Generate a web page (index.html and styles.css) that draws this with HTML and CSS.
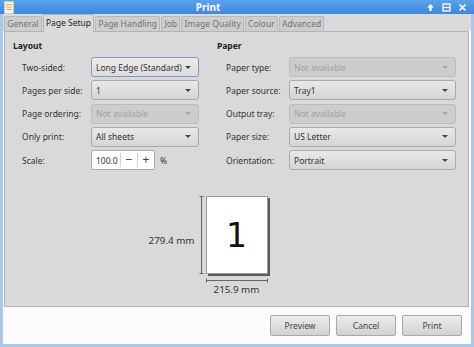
FILE: index.html
```html
<!DOCTYPE html>
<html lang="en">
<head>
    <meta charset="UTF-8">
    <title>Print</title>
    <link rel="stylesheet" href="styles.css">
</head>
<body>
<div class="window">
    <div class="titlebar">
        <span class="app-icon">
            <svg width="10" height="13" viewBox="0 0 10 13">
                <rect x="0.5" y="0.5" width="9" height="12" fill="#f4f4f0" stroke="#c9c9c0"/>
                <line x1="2" y1="3.5" x2="8" y2="3.5" stroke="#e0b040"/>
                <line x1="2" y1="6" x2="8" y2="6" stroke="#e0b040"/>
                <line x1="2" y1="8.5" x2="8" y2="8.5" stroke="#e0b040"/>
            </svg>
        </span>
        <span class="title">Print</span>
        <span class="controls">
            <svg width="9" height="9" viewBox="0 0 9 9"><path d="M4.5 1 L8 4.5 H5.7 V8 H3.3 V4.5 H1 Z" fill="#fff"/></svg>
            <svg width="9" height="9" viewBox="0 0 9 9"><rect x="1" y="1" width="7" height="7" fill="none" stroke="#fff" stroke-width="1.3"/><line x1="1" y1="4.5" x2="8" y2="4.5" stroke="#fff" stroke-width="1.3"/></svg>
            <svg width="9" height="9" viewBox="0 0 9 9"><path d="M1.5 1.5 L7.5 7.5 M7.5 1.5 L1.5 7.5" stroke="#fff" stroke-width="1.7"/></svg>
        </span>
    </div>
    <div class="dialog">
        <div class="tabs">
            <span class="tab">General</span>
            <span class="tab active">Page Setup</span>
            <span class="tab">Page Handling</span>
            <span class="tab">Job</span>
            <span class="tab">Image Quality</span>
            <span class="tab">Colour</span>
            <span class="tab">Advanced</span>
        </div>
        <div class="panel">
            <div class="columns">
                <section class="group">
                    <h3>Layout</h3>
                    <div class="form layout-form">
                        <label>Two-sided:</label>
                        <div class="combo focus"><span>Long Edge (Standard)</span><i class="arrow"></i></div>
                        <label>Pages per side:</label>
                        <div class="combo"><span>1</span><i class="arrow"></i></div>
                        <label>Page ordering:</label>
                        <div class="combo disabled"><span>Not available</span><i class="arrow"></i></div>
                        <label>Only print:</label>
                        <div class="combo"><span>All sheets</span><i class="arrow"></i></div>
                        <label>Scale:</label>
                        <div class="scale">
                            <div class="spin">
                                <span class="value">100.0</span>
                                <span class="step">&minus;</span>
                                <span class="step">+</span>
                            </div>
                            <span class="unit">%</span>
                        </div>
                    </div>
                </section>
                <section class="group">
                    <h3>Paper</h3>
                    <div class="form paper-form">
                        <label>Paper type:</label>
                        <div class="combo disabled"><span>Not available</span><i class="arrow"></i></div>
                        <label>Paper source:</label>
                        <div class="combo"><span>Tray1</span><i class="arrow"></i></div>
                        <label>Output tray:</label>
                        <div class="combo disabled"><span>Not available</span><i class="arrow"></i></div>
                        <label>Paper size:</label>
                        <div class="combo"><span>US Letter</span><i class="arrow"></i></div>
                        <label>Orientation:</label>
                        <div class="combo"><span>Portrait</span><i class="arrow"></i></div>
                    </div>
                </section>
            </div>
            <div class="preview">
                <div class="side left">
                    <span class="dim">279.4 mm</span>
                    <svg class="vruler" width="5" height="78" viewBox="0 0 5 78">
                        <line x1="2.5" y1="0" x2="2.5" y2="78" stroke="#666"/>
                        <line x1="0.5" y1="0.5" x2="4.5" y2="0.5" stroke="#666"/>
                        <line x1="0.5" y1="77.5" x2="4.5" y2="77.5" stroke="#666"/>
                    </svg>
                </div>
                <div class="sheet-col">
                    <div class="sheet">1</div>
                    <svg class="hruler" width="62" height="5" viewBox="0 0 62 5">
                        <line x1="0" y1="2.5" x2="62" y2="2.5" stroke="#666"/>
                        <line x1="0.5" y1="0.5" x2="0.5" y2="4.5" stroke="#666"/>
                        <line x1="61.5" y1="0.5" x2="61.5" y2="4.5" stroke="#666"/>
                    </svg>
                    <span class="dim">215.9 mm</span>
                </div>
                <div class="side"></div>
            </div>
        </div>
        <div class="buttons">
            <button>Preview</button>
            <button>Cancel</button>
            <button>Print</button>
        </div>
    </div>
</div>
</body>
</html>
```

FILE: styles.css
```css
body {
    margin: 0;
    font-family: "Noto Sans", sans-serif;
    font-size: 8.5px;
    color: #333;
    background-color: #a9c8ec;
}
.window {
    width: 474px;
    height: 347px;
    display: flex;
    flex-direction: column;
}
.titlebar {
    height: 14px;
    flex: none;
    display: flex;
    align-items: center;
    background: linear-gradient(#5ba2ee, #3d88de);
    color: white;
}
.app-icon {
    width: 16px;
    padding-left: 4px;
    display: flex;
    align-items: center;
}
.title {
    flex: 1;
    text-align: center;
    font-weight: bold;
    font-size: 10px;
    padding-right: 30px;
}
.controls {
    display: flex;
    gap: 7px;
    padding-right: 7px;
}
.dialog {
    flex: 1;
    margin: 0 3px 3px;
    background-color: #fcfcfc;
    display: flex;
    flex-direction: column;
}
.tabs {
    height: 17px;
    flex: none;
    display: flex;
    align-items: flex-end;
    gap: 1px;
    padding-left: 1px;
    background-color: #dadada;
    position: relative;
    z-index: 1;
}
.tab {
    height: 15px;
    line-height: 14px;
    padding: 0 2.2px;
    box-sizing: border-box;
    border: 1px solid #b7b7b7;
    border-bottom: none;
    border-radius: 2px 2px 0 0;
    background-color: #cecece;
    color: #707070;
}
.tab.active {
    height: 18px;
    line-height: 16px;
    margin-bottom: -1px;
    background-color: #dadada;
    color: #222;
}
.panel {
    flex: 1;
    margin: 0 2px 0 1px;
    border: 1px solid #b3b3b3;
    background-color: #d9d9d9;
    padding: 8px 8px 0;
    display: flex;
    flex-direction: column;
}
.columns {
    display: grid;
    grid-template-columns: 204px 1fr;
}
.group h3 {
    margin: 0;
    font-size: 8.5px;
    line-height: 12px;
    color: #222;
}
.form {
    display: grid;
    grid-auto-rows: 20px;
    row-gap: 3.25px;
    align-items: center;
    padding-left: 9px;
    margin-top: 5px;
}
.layout-form {
    grid-template-columns: 69px 108px;
}
.paper-form {
    grid-template-columns: 63px 167px;
}
.combo {
    height: 20px;
    box-sizing: border-box;
    border: 1px solid #aaaaaa;
    border-radius: 3px;
    background: linear-gradient(#e9e9e9, #d5d5d5);
    padding: 0 7px 0 4px;
    display: flex;
    align-items: center;
    justify-content: space-between;
    color: #333;
}
.combo.focus {
    border-color: #7f9dc2;
    background: linear-gradient(#ececec, #dcdcdc);
}
.combo.disabled {
    border-color: #bcbcbc;
    background: #cdcdcd;
    color: #a0a0a0;
}
.arrow {
    width: 0;
    height: 0;
    border-left: 3px solid transparent;
    border-right: 3px solid transparent;
    border-top: 3px solid #444;
}
.combo.disabled .arrow {
    border-top-color: #a8a8a8;
}
.scale {
    display: flex;
    align-items: center;
}
.spin {
    width: 64px;
    height: 20px;
    box-sizing: border-box;
    border: 1px solid #aaaaaa;
    border-radius: 2px;
    background-color: white;
    display: flex;
    align-items: center;
}
.spin .value {
    flex: 1;
    padding-left: 4px;
}
.spin .step {
    width: 16px;
    height: 14px;
    line-height: 14px;
    text-align: center;
    border-left: 1px solid #d0d0d0;
    font-size: 12px;
    color: #444;
}
.unit {
    margin-left: 5px;
}
.preview {
    display: flex;
    align-items: flex-start;
    padding-top: 26px;
}
.side {
    flex: 1;
}
.side.left {
    display: flex;
    justify-content: flex-end;
    align-items: center;
    height: 79px;
}
.side.left .dim {
    margin-right: 4px;
    margin-top: 10px;
}
.vruler {
    margin-right: 2px;
    margin-top: -1px;
}
.sheet-col {
    width: 62px;
    display: flex;
    flex-direction: column;
    align-items: center;
}
.sheet {
    width: 62px;
    height: 78px;
    box-sizing: border-box;
    border: 1px solid #9a9a9a;
    background-color: white;
    box-shadow: 2px 2px 0 #5a5a5a;
    display: flex;
    align-items: center;
    justify-content: center;
    font-family: "DejaVu Sans", sans-serif;
    font-size: 33px;
    color: #111;
}
.hruler {
    margin-top: 4px;
}
.dim {
    color: #333;
    font-size: 9.8px;
}
.sheet-col .dim {
    margin-top: 0;
    white-space: nowrap;
}
.buttons {
    height: 37px;
    flex: none;
    display: flex;
    justify-content: flex-end;
    align-items: center;
    gap: 6px;
    padding-right: 9px;
}
.buttons button {
    width: 60px;
    height: 21px;
    border: 1px solid #a9a9a9;
    border-radius: 2px;
    background: linear-gradient(#ececec, #d2d2d2);
    font-family: "Noto Sans", sans-serif;
    font-size: 8.5px;
    color: #444;
    padding: 0;
}
```
